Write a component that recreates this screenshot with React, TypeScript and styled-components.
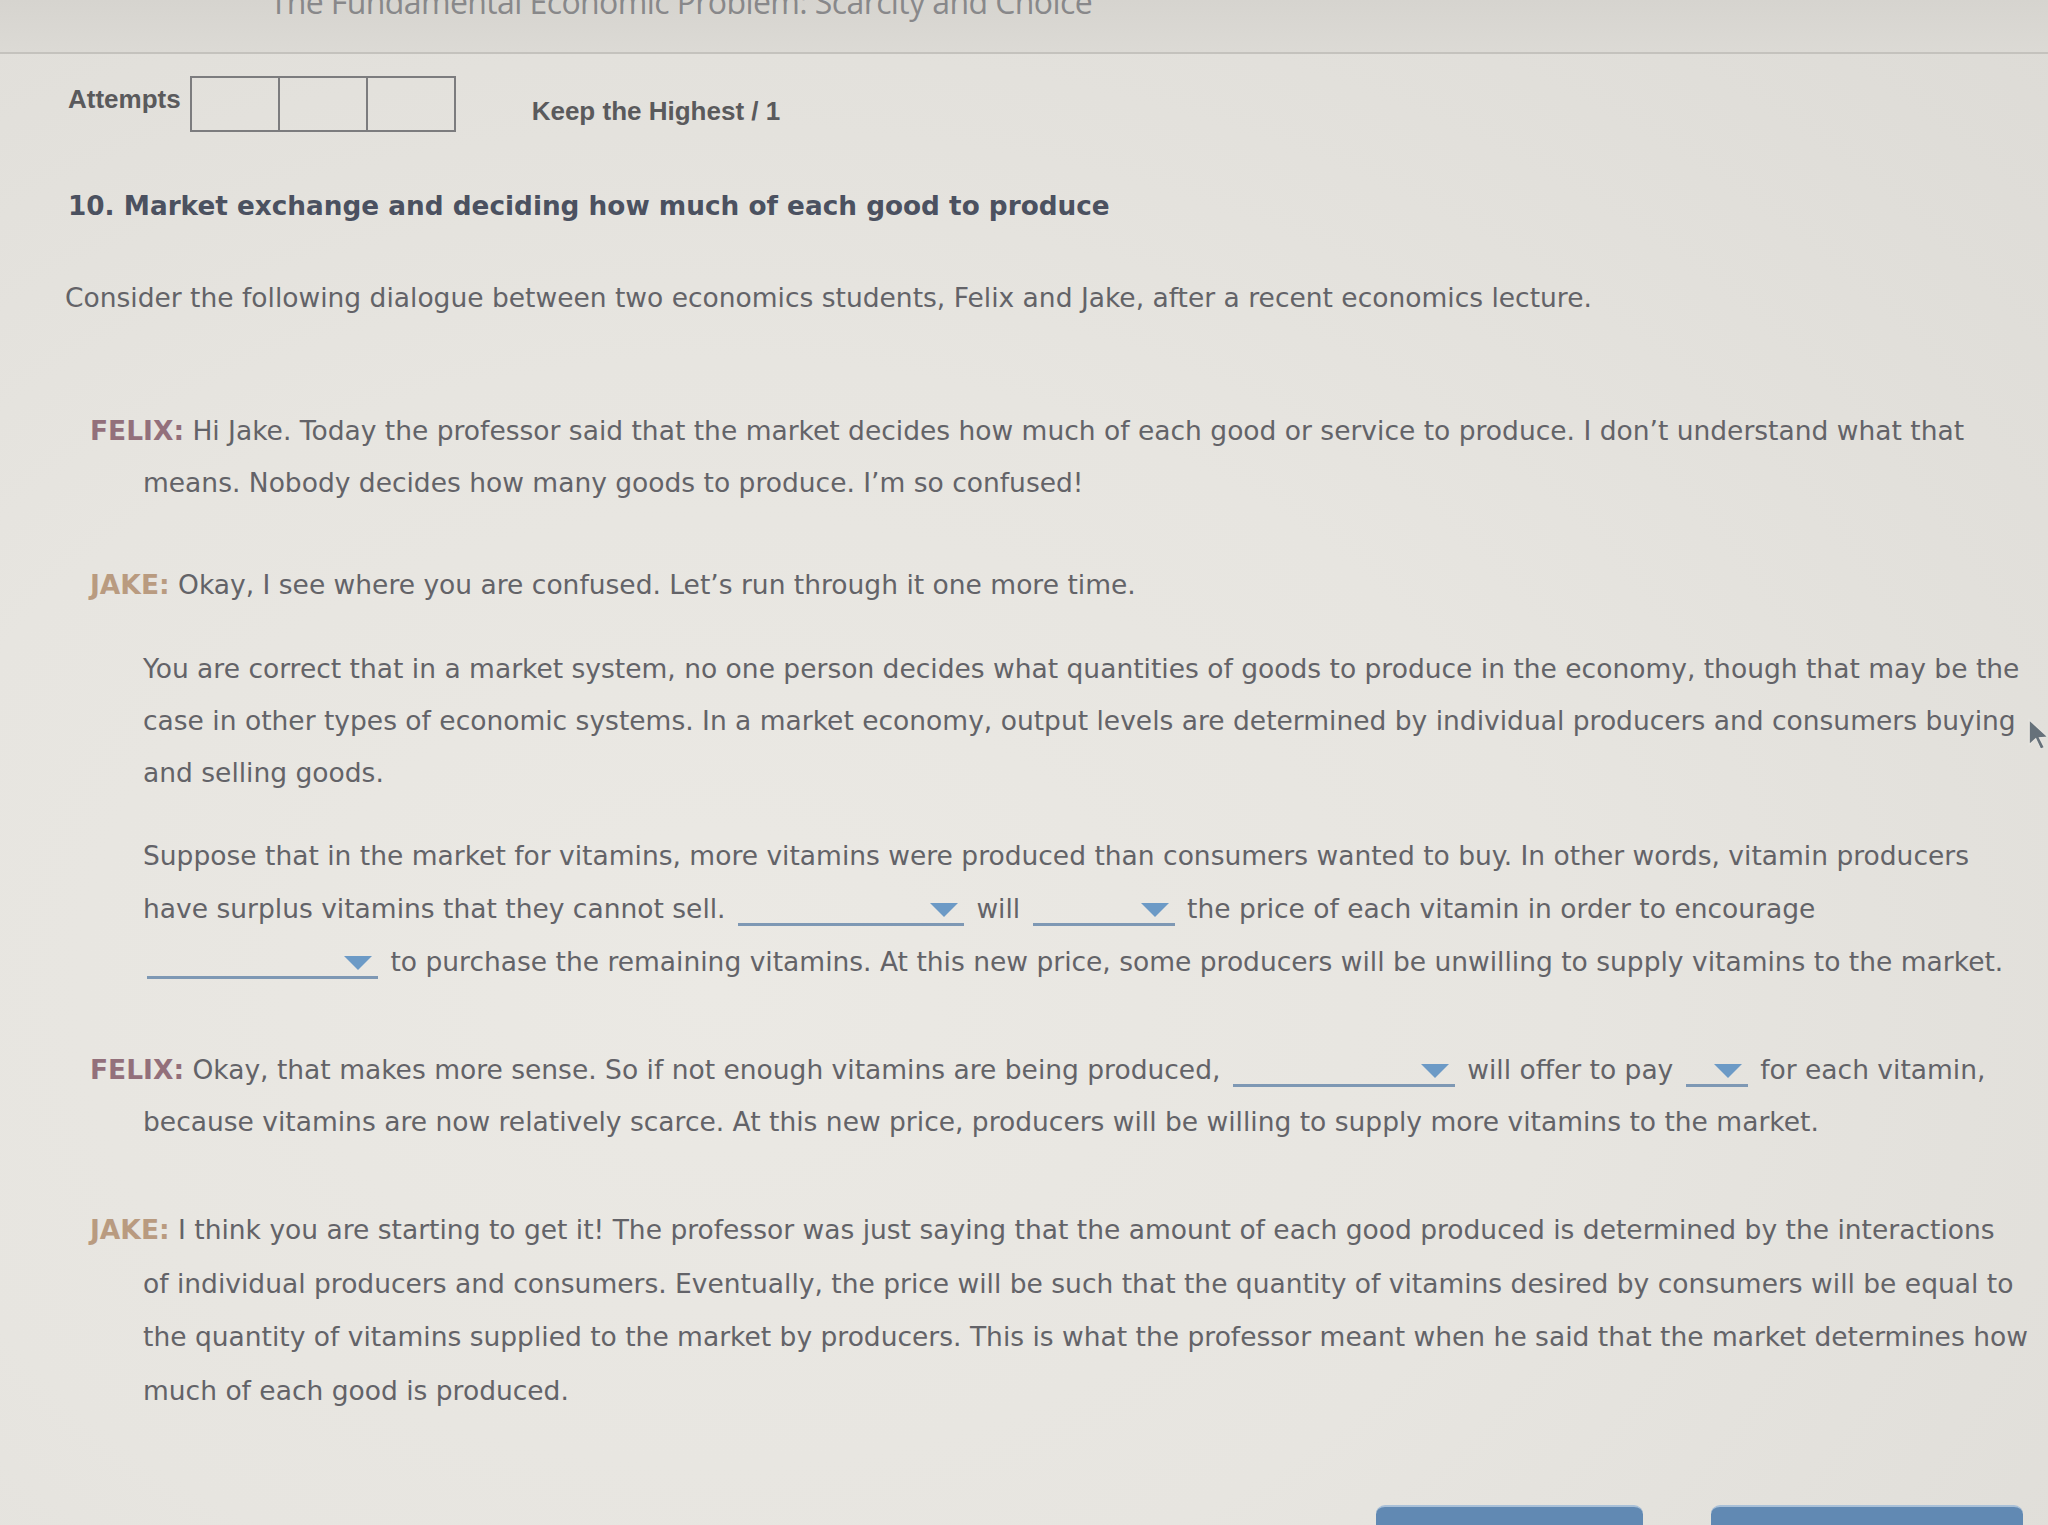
import React from "react";
import styled, { createGlobalStyle } from "styled-components";

const GlobalStyle = createGlobalStyle`
  html, body {
    margin: 0;
    padding: 0;
    overflow: hidden;
  }
  body {
    background: #e4e2dd;
    font-family: "DejaVu Sans", Verdana, sans-serif;
  }
`;

const Page = styled.div`
  position: relative;
  width: 2048px;
  height: 1525px;
  overflow: hidden;
  display: flex;
  flex-direction: column;
  background: radial-gradient(ellipse at 35% 65%, #ebe9e4 0%, #e7e5e0 45%, #dddbd6 100%);
`;

const TopBar = styled.header`
  height: 52px;
  flex-shrink: 0;
  overflow: hidden;
  background: linear-gradient(#d6d4cf, #dcdad5);
  border-bottom: 2px solid #c4c2bd;
`;

const CourseTitle = styled.div`
  width: 1092px;
  margin-top: -14px;
  text-align: right;
  font-family: "Open Sans", sans-serif;
  font-size: 32px;
  line-height: 32px;
  letter-spacing: -0.6px;
  color: #88888a;
  white-space: nowrap;
`;

const Main = styled.main`
  padding-left: 68px;
  display: flex;
  flex-direction: column;
`;

const AttemptsRow = styled.div`
  display: flex;
  align-items: center;
  margin-top: 22px;
  font-family: "Liberation Sans", Arial, sans-serif;
  font-weight: bold;
  font-size: 26px;
  color: #5a5a5c;
`;

const AttemptsLabel = styled.span`
  margin-top: -10px;
`;

const AttemptBoxes = styled.div`
  display: flex;
  margin-left: 9px;
  border: 2px solid #7c7c7e;
`;

const AttemptBox = styled.div`
  width: 86px;
  height: 52px;
  & + & {
    border-left: 2px solid #7c7c7e;
  }
`;

const KeepLabel = styled.span`
  margin-left: 76px;
  margin-top: 14px;
`;

const QuestionTitle = styled.h2`
  margin: 58px 0 0;
  font-size: 26.3px;
  line-height: 32px;
  font-weight: bold;
  color: #4b5160;
  white-space: nowrap;
`;

const Intro = styled.p`
  margin: 50px 0 0 -3px;
  font-size: 26.5px;
  line-height: 52px;
  color: #636368;
  white-space: nowrap;
`;

const Speech = styled.div<{ $top: number; $lh?: number }>`
  margin: ${(p) => p.$top}px 0 0 75px;
  text-indent: -53px;
  font-size: 26.5px;
  line-height: ${(p) => p.$lh ?? 52}px;
  color: #636368;
  white-space: nowrap;
`;

const Speaker = styled.span<{ $tone: string }>`
  font-weight: bold;
  color: ${(p) => p.$tone};
`;

const Reply = styled.p<{ $top: number; $lh?: number }>`
  margin: ${(p) => p.$top}px 0 0 0;
  text-indent: 0;
  line-height: ${(p) => p.$lh ?? 52}px;
`;

const Select = styled.span<{ $w: number }>`
  display: inline-block;
  position: relative;
  width: ${(p) => p.$w}px;
  height: 30px;
  margin: 0 4px;
  text-indent: 0;
  vertical-align: -8px;
  border-bottom: 3px solid #7e98b4;
  &::after {
    content: "";
    position: absolute;
    right: 6px;
    bottom: 6px;
    border-left: 14px solid transparent;
    border-right: 14px solid transparent;
    border-top: 14px solid #6c9ac6;
  }
`;

const Footer = styled.footer`
  margin-top: auto;
  margin-bottom: -42px;
  display: flex;
  justify-content: flex-end;
  gap: 68px;
  padding-right: 25px;
`;

const ActionButton = styled.button<{ $w: number }>`
  width: ${(p) => p.$w}px;
  height: 62px;
  border: none;
  border-top: 2px solid #a9c0d8;
  border-radius: 9px 9px 0 0;
  background: #6189b3;
`;

const Cursor = styled.svg`
  position: absolute;
  left: 2027px;
  top: 718px;
`;

const FELIX = "#93707b";
const JAKE = "#b99b80";

export default function App() {
  return (
    <>
      <GlobalStyle />
      <Page>
        <TopBar>
          <CourseTitle>
            The Fundamental Economic Problem: Scarcity and Choice
          </CourseTitle>
        </TopBar>
        <Main>
          <AttemptsRow>
            <AttemptsLabel>Attempts</AttemptsLabel>
            <AttemptBoxes>
              <AttemptBox />
              <AttemptBox />
              <AttemptBox />
            </AttemptBoxes>
            <KeepLabel>Keep the Highest / 1</KeepLabel>
          </AttemptsRow>

          <QuestionTitle>
            10. Market exchange and deciding how much of each good to produce
          </QuestionTitle>

          <Intro>
            Consider the following dialogue between two economics students,
            Felix and Jake, after a recent economics lecture.
          </Intro>

          <Speech $top={81}>
            <Speaker $tone={FELIX}>FELIX:</Speaker> Hi Jake. Today the
            professor said that the market decides how much of each good or
            service to produce. I don’t understand what that
            <br />
            means. Nobody decides how many goods to produce. I’m so confused!
          </Speech>

          <Speech $top={50}>
            <Speaker $tone={JAKE}>JAKE:</Speaker> Okay, I see where you are
            confused. Let’s run through it one more time.
            <Reply $top={32}>
              You are correct that in a market system, no one person decides
              what quantities of goods to produce in the economy, though that
              may be the
              <br />
              case in other types of economic systems. In a market economy,
              output levels are determined by individual producers and
              consumers buying
              <br />
              and selling goods.
            </Reply>
            <Reply $top={30} $lh={53}>
              Suppose that in the market for vitamins, more vitamins were
              produced than consumers wanted to buy. In other words, vitamin
              producers
              <br />
              have surplus vitamins that they cannot sell. <Select $w={226} />{" "}
              will <Select $w={142} /> the price of each vitamin in order to
              encourage
              <br />
              <Select $w={231} /> to purchase the remaining vitamins. At this
              new price, some producers will be unwilling to supply vitamins to
              the market.
            </Reply>
          </Speech>

          <Speech $top={56}>
            <Speaker $tone={FELIX}>FELIX:</Speaker> Okay, that makes more
            sense. So if not enough vitamins are being produced,{" "}
            <Select $w={222} /> will offer to pay <Select $w={62} /> for each
            vitamin,
            <br />
            because vitamins are now relatively scarce. At this new price,
            producers will be willing to supply more vitamins to the market.
          </Speech>

          <Speech $top={55} $lh={53.5}>
            <Speaker $tone={JAKE}>JAKE:</Speaker> I think you are starting to
            get it! The professor was just saying that the amount of each good
            produced is determined by the interactions
            <br />
            of individual producers and consumers. Eventually, the price will
            be such that the quantity of vitamins desired by consumers will be
            equal to
            <br />
            the quantity of vitamins supplied to the market by producers. This
            is what the professor meant when he said that the market determines
            how
            <br />
            much of each good is produced.
          </Speech>
        </Main>

        <Footer>
          <ActionButton $w={267} aria-label="Grade It Now" />
          <ActionButton $w={312} aria-label="Save & Continue" />
        </Footer>

        <Cursor width="24" height="34" viewBox="0 0 22 30">
          <path
            d="M2 1 L2 24 L8 18.5 L12.5 28 L16 26.5 L11.5 17.5 L19.5 17 Z"
            fill="#66717a"
            stroke="#e6e4df"
            strokeWidth="1.2"
          />
        </Cursor>
      </Page>
    </>
  );
}
